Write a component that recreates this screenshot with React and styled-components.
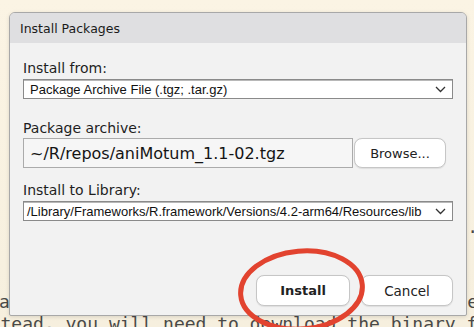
import React from "react";
import styled, { createGlobalStyle } from "styled-components";

const GlobalStyle = createGlobalStyle`
  html, body {
    margin: 0;
    padding: 0;
    background: #f7f0df;
  }
  * {
    box-sizing: border-box;
  }
`;

const Page = styled.div`
  position: relative;
  width: 474px;
  height: 327px;
  overflow: hidden;
  background: linear-gradient(180deg, #fbf4e4 0%, #f6efde 100%);
`;

// page text that shows around the dialog
const Backdrop = styled.div`
  padding-top: 216px;
  margin: 0 -4px 0 -1px;
  font-family: "DejaVu Sans Mono", "Liberation Mono", monospace;
  font-size: 18px;
  color: #4a4a48;
  white-space: pre;
`;

const Line = styled.div`
  height: 22px;
  line-height: 22px;
  display: flex;
  justify-content: space-between;
  margin-left: ${(p) => p.$shift || 0}px;
  margin-bottom: ${(p) => p.$after || 0}px;
`;

const Window = styled.div`
  position: absolute;
  left: 9px;
  top: 12px;
  width: 458px;
  height: 304px;
  display: flex;
  flex-direction: column;
  background: #f2f2f2;
  border: 1px solid #a8a8a8;
  border-radius: 6px 6px 2px 2px;
  box-shadow: 0 1px 4px rgba(0, 0, 0, 0.12);
  overflow: hidden;
  font-family: "DejaVu Sans", "Liberation Sans", sans-serif;
  color: #1c1c1c;
`;

const TitleBar = styled.div`
  height: 30px;
  display: flex;
  align-items: center;
  padding-left: 10px;
  background: #dfdfe1;
  font-size: 12.5px;
  color: #1a1a1a;
`;

const Body = styled.div`
  flex: 1;
  display: flex;
  flex-direction: column;
  padding: 17px 13px 9px 13px;
`;

const Label = styled.div`
  font-size: 14px;
  line-height: 17px;
  margin-top: ${(p) => p.$gap || 0}px;
  color: #1e1e1e;
`;

const Select = styled.div`
  margin-top: 2px;
  height: 20px;
  display: flex;
  align-items: center;
  justify-content: space-between;
  padding: 0 6px 0 ${(p) => p.$pad || 6}px;
  background: #ffffff;
  border: 1px solid #8a8a8a;
  box-shadow: inset 0 1px 0 #b8b8b8;
  font-family: "Liberation Sans", Arial, sans-serif;
  font-size: 13px;
  color: #111;
  white-space: nowrap;
  overflow: hidden;
`;

const Chevron = styled.svg`
  flex: none;
  width: 11px;
  height: 7px;
  margin-left: 6px;
`;

const ArchiveRow = styled.div`
  margin-top: 1px;
  display: flex;
  align-items: stretch;
  gap: 1px;
  height: 30px;
`;

const PathField = styled.div`
  width: 330px;
  display: flex;
  align-items: center;
  padding-left: 6px;
  background: #f6f6f6;
  border: 1px solid #ababab;
  font-size: 16px;
  color: #141414;
  white-space: nowrap;
`;

const Button = styled.div`
  width: ${(p) => p.$w}px;
  height: ${(p) => p.$h || 31}px;
  display: flex;
  align-items: center;
  justify-content: center;
  background: #ffffff;
  border: 1px solid #c6c6c6;
  border-radius: 8px;
  box-shadow: 0 0.5px 1px rgba(0, 0, 0, 0.08);
  font-size: ${(p) => p.$size || 13}px;
  font-weight: ${(p) => (p.$strong ? 700 : 400)};
  color: #222;
`;

const Footer = styled.div`
  margin-top: auto;
  display: flex;
  justify-content: flex-end;
  gap: 11px;
`;

const Marker = styled.svg`
  position: absolute;
  inset: 0;
  width: 474px;
  height: 327px;
  pointer-events: none;
`;

function Caret() {
  return (
    <Chevron viewBox="0 0 11 7">
      <polyline
        points="1,1 5.5,5.5 10,1"
        fill="none"
        stroke="#333"
        strokeWidth="1.3"
      />
    </Chevron>
  );
}

export default function App() {
  return (
    <>
      <GlobalStyle />
      <Page>
        <Backdrop>
          <Line $after={53}>
            <span />
            <span>.</span>
          </Line>
          <Line>
            <span>a</span>
            <span>e</span>
          </Line>
          <Line $shift={-31}>
            <span>Instead, you will need to download the binary f</span>
          </Line>
        </Backdrop>

        <Window>
          <TitleBar>Install Packages</TitleBar>
          <Body>
            <Label>Install from:</Label>
            <Select>
              <span>Package Archive File (.tgz; .tar.gz)</span>
              <Caret />
            </Select>

            <Label $gap={21}>Package archive:</Label>
            <ArchiveRow>
              <PathField>~/R/repos/aniMotum_1.1-02.tgz</PathField>
              <Button $w={92} $h={30}>Browse...</Button>
            </ArchiveRow>

            <Label $gap={14}>Install to Library:</Label>
            <Select $pad={3}>
              <span>/Library/Frameworks/R.framework/Versions/4.2-arm64/Resources/lib</span>
              <Caret />
            </Select>

            <Footer>
              <Button $w={94} $strong>Install</Button>
              <Button $w={92} $size={13.5}>Cancel</Button>
            </Footer>
          </Body>
        </Window>

        <Marker viewBox="0 0 474 327">
          <ellipse
            cx="301.5"
            cy="290"
            rx="61"
            ry="39"
            transform="rotate(-5 301.5 290)"
            fill="none"
            stroke="#e2432f"
            strokeWidth="5"
          />
        </Marker>
      </Page>
    </>
  );
}
